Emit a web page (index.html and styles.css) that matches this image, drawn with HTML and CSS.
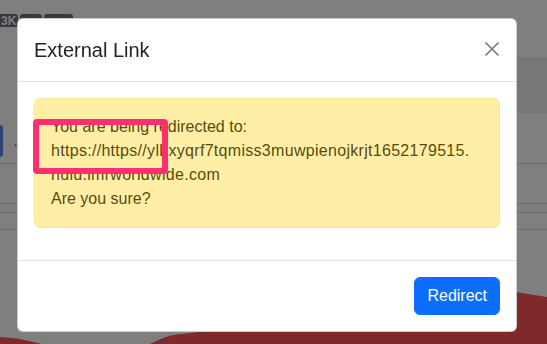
FILE: index.html
```html
<!DOCTYPE html>
<html lang="en">
<head>
  <meta charset="UTF-8" />
  <meta name="viewport" content="width=device-width, initial-scale=1.0" />
  <title>External Link</title>
  <link rel="stylesheet" href="styles.css">
</head>
<body>

  <!-- Page behind the dialog -->
  <div class="page">
    <div class="tags">
      <span class="tag tag-count">3K</span>
      <span class="tag tag-mid"></span>
      <span class="tag tag-long"></span>
    </div>
    <div class="band"></div>
    <div class="toolbar">
      <span class="btn-back"></span>
      <span class="arrow">&larr;</span>
    </div>
    <div class="rows">
      <div class="row row-a"></div>
      <div class="row row-b"></div>
      <div class="row row-c"></div>
      <div class="row row-d"></div>
    </div>
    <svg class="blob" width="547" height="344" viewBox="0 0 547 344">
      <path d="M0 337 C18 338 30 341 42 344 L150 344 C160 339 168 335 182 334 L470 300 C490 296 505 292 516 292 L547 297 L547 344 L0 344 Z" fill="#ff5555"/>
    </svg>
  </div>

  <div class="backdrop"></div>

  <!-- External link dialog -->
  <div class="modal">
    <div class="modal-content">
      <div class="modal-header">
        <h5 class="modal-title">External Link</h5>
        <button class="btn-close" type="button" aria-label="Close">
          <svg width="16" height="16" viewBox="0 0 16 16">
            <path d="M1.5 1.5 L14.5 14.5 M14.5 1.5 L1.5 14.5" stroke="#7b7b7b" stroke-width="1.7" fill="none"/>
          </svg>
        </button>
      </div>
      <div class="modal-body">
        <div class="alert">
          You are being redirected to:<br>
          <span class="url">https://https//ylbxyqrf7tqmiss3muwpienojkrjt1652179515.<wbr>hulu.imrworldwide.com</span><br>
          Are you sure?
          <span class="mark"></span>
        </div>
      </div>
      <div class="modal-footer">
        <button class="btn-primary" type="button">Redirect</button>
      </div>
    </div>
  </div>

</body>
</html>
```

FILE: styles.css
```css
/* General */
body {
  font-family: "Liberation Sans", Arial, sans-serif;
  margin: 0;
  padding: 0;
  background-color: #fff;
  overflow: hidden;
}

/* Page behind the dialog */
.page {
  position: relative;
  height: 344px;
}

.tags {
  display: flex;
  gap: 2px;
  padding-top: 14px;
}

.tag {
  height: 13px;
  background-color: #6c757d;
  border-radius: 3px 3px 0 0;
  color: #fff;
  font-size: 12px;
  font-weight: bold;
  line-height: 14px;
}

.tag-count {
  width: 17px;
  padding-left: 1px;
  border-radius: 0 3px 0 0;
}

.tag-mid {
  width: 22px;
}

.tag-long {
  width: 29px;
}

.band {
  margin: 30px 0 0 50%;
  height: 56px;
  background-color: #eeeeee;
}

.toolbar {
  display: flex;
  align-items: center;
  gap: 9px;
  margin-top: 12px;
  height: 32px;
}

.btn-back {
  width: 3px;
  height: 32px;
  background-color: #5b8de8;
  border-radius: 0 3px 3px 0;
}

.arrow {
  color: #2f7bf0;
  font-size: 12px;
  font-weight: bold;
  margin-top: 4px;
}

.row {
  border-bottom: 1px solid #d4d4d4;
}

.row-a { height: 6px; }
.row-b { height: 39px; }
.row-c { height: 8px; }
.row-d { height: 16px; }

.blob {
  position: absolute;
  left: 0;
  top: 0;
}

/* Dialog */
.backdrop {
  position: fixed;
  inset: 0;
  background-color: rgba(0, 0, 0, 0.5);
}

.modal {
  position: fixed;
  inset: 0;
  padding: 18px 0 0 17px;
}

.modal-content {
  width: 500px;
  box-sizing: border-box;
  background-color: #fff;
  border: 1px solid rgba(0, 0, 0, 0.2);
  border-radius: 6px;
  color: #212529;
}

.modal-header {
  display: flex;
  align-items: center;
  justify-content: space-between;
  padding: 16px;
  border-bottom: 1px solid #dee2e6;
}

.modal-title {
  margin: 0;
  font-size: 20px;
  font-weight: normal;
  line-height: 30px;
}

.btn-close {
  width: 16px;
  height: 16px;
  padding: 0;
  margin-top: -2px;
  border: 0;
  background: none;
  cursor: pointer;
}

.btn-close svg {
  display: block;
}

.modal-body {
  padding: 16px;
}

.alert {
  position: relative;
  padding: 16px;
  margin-bottom: 16px;
  background-color: #ffefa6;
  border: 1px solid #fbe899;
  border-radius: 6px;
  color: #5c4a0c;
  font-size: 16px;
  line-height: 24px;
}

.url {
  letter-spacing: 0.3px;
}

/* Screenshot annotation */
.mark {
  position: absolute;
  left: -2px;
  top: 20px;
  width: 135px;
  height: 55px;
  box-sizing: border-box;
  border: 6px solid #fe2f6e;
  border-radius: 4px;
}

.modal-footer {
  display: flex;
  justify-content: flex-end;
  padding: 12px;
  border-top: 1px solid #dee2e6;
}

.btn-primary {
  margin: 4px;
  padding: 6px 12px;
  font-family: inherit;
  font-size: 16px;
  line-height: 24px;
  color: #fff;
  background-color: #0d6efd;
  border: 1px solid #0d6efd;
  border-radius: 6px;
  cursor: pointer;
}
```
